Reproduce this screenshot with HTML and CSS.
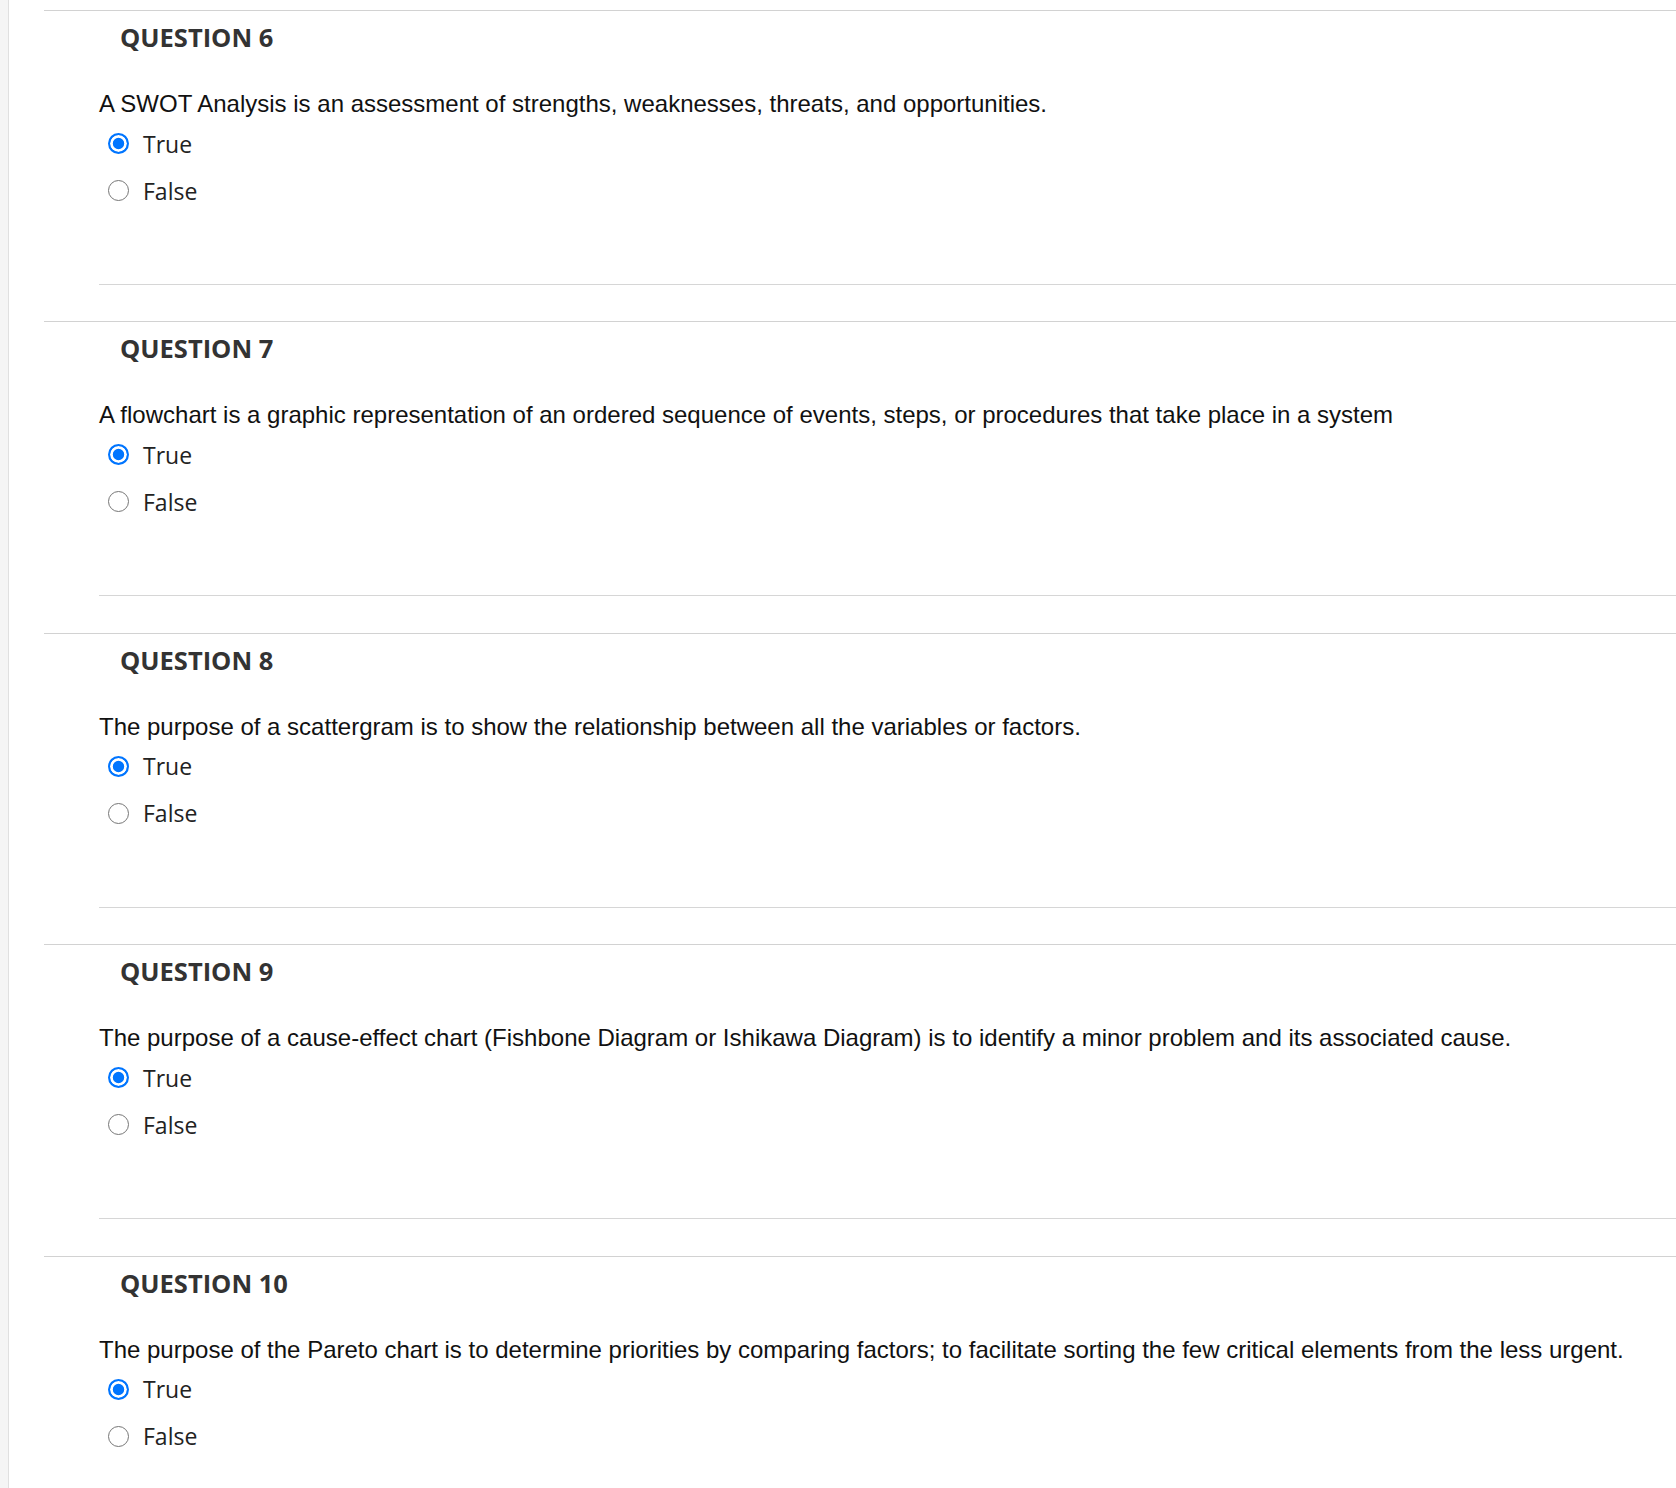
FILE: index.html
```html
<!DOCTYPE html>
<html lang="en">
<head>
<meta charset="utf-8">
<title>Questions</title>
<link rel="stylesheet" href="styles.css">
</head>
<body>
<div class="page">
  <div class="rail"></div>
  <main class="content">
    <section class="question">
      <h3 class="q-header">QUESTION 6</h3>
      <div class="q-body">
        <p class="q-text">A SWOT Analysis is an assessment of strengths, weaknesses, threats, and opportunities.</p>
        <div class="options">
          <label class="option"><input type="radio" name="q6" checked><span>True</span></label>
          <label class="option"><input type="radio" name="q6"><span>False</span></label>
        </div>
      </div>
    </section>
    <section class="question">
      <h3 class="q-header">QUESTION 7</h3>
      <div class="q-body">
        <p class="q-text">A flowchart is a graphic representation of an ordered sequence of events, steps, or procedures that take place in a system</p>
        <div class="options">
          <label class="option"><input type="radio" name="q7" checked><span>True</span></label>
          <label class="option"><input type="radio" name="q7"><span>False</span></label>
        </div>
      </div>
    </section>
    <section class="question">
      <h3 class="q-header">QUESTION 8</h3>
      <div class="q-body">
        <p class="q-text">The purpose of a scattergram is to show the relationship between all the variables or factors.</p>
        <div class="options">
          <label class="option"><input type="radio" name="q8" checked><span>True</span></label>
          <label class="option"><input type="radio" name="q8"><span>False</span></label>
        </div>
      </div>
    </section>
    <section class="question">
      <h3 class="q-header">QUESTION 9</h3>
      <div class="q-body">
        <p class="q-text">The purpose of a cause-effect chart (Fishbone Diagram or Ishikawa Diagram) is to identify a minor problem and its associated cause.</p>
        <div class="options">
          <label class="option"><input type="radio" name="q9" checked><span>True</span></label>
          <label class="option"><input type="radio" name="q9"><span>False</span></label>
        </div>
      </div>
    </section>
    <section class="question">
      <h3 class="q-header">QUESTION 10</h3>
      <div class="q-body">
        <p class="q-text">The purpose of the Pareto chart is to determine priorities by comparing factors; to facilitate sorting the few critical elements from the less urgent.</p>
        <div class="options">
          <label class="option"><input type="radio" name="q10" checked><span>True</span></label>
          <label class="option"><input type="radio" name="q10"><span>False</span></label>
        </div>
      </div>
    </section>
  </main>
</div>
</body>
</html>
```

FILE: styles.css
```css
html, body {
  margin: 0;
  padding: 0;
  background: #ffffff;
}

.page {
  display: flex;
  min-height: 100vh;
}

.rail {
  flex: 0 0 8px;
  background: #f5f5f5;
  border-right: 1px solid #e0e0e0;
}

.content {
  flex: 1;
  padding-top: 10px;
  padding-left: 35px;
}

.question {
  border-top: 1px solid #d2d2d2;
  padding-top: 9px;
  margin-bottom: 36.4px;
}

.q-header {
  margin: 0;
  padding-left: 76px;
  font-family: "Open Sans", "DejaVu Sans", sans-serif;
  font-weight: 700;
  font-size: 25.5px;
  line-height: 34px;
  color: #333333;
}

.q-body {
  margin-left: 55px;
  margin-top: 37px;
  padding-bottom: 69px;
  border-bottom: 1px solid #d6d6d6;
}

.q-text {
  margin: 0;
  font-family: "Liberation Sans", Arial, sans-serif;
  font-size: 24px;
  line-height: 26px;
  color: #111111;
}

.options {
  margin-top: 3px;
  margin-bottom: 1px;
  display: flex;
  flex-direction: column;
}

.option {
  display: flex;
  align-items: center;
  height: 47px;
  padding-left: 9px;
  font-family: "Open Sans", "DejaVu Sans", sans-serif;
  font-size: 23px;
  color: #222222;
}

.option input {
  appearance: none;
  -webkit-appearance: none;
  box-sizing: border-box;
  width: 21px;
  height: 21px;
  margin: 0 14px 0 0;
  border-radius: 50%;
  border: 1.8px solid #767676;
  background: #ffffff;
  flex: 0 0 auto;
}

.option input:checked {
  border: 2.2px solid #0075ff;
  background: #0075ff;
  box-shadow: inset 0 0 0 2.8px #ffffff;
}
```
